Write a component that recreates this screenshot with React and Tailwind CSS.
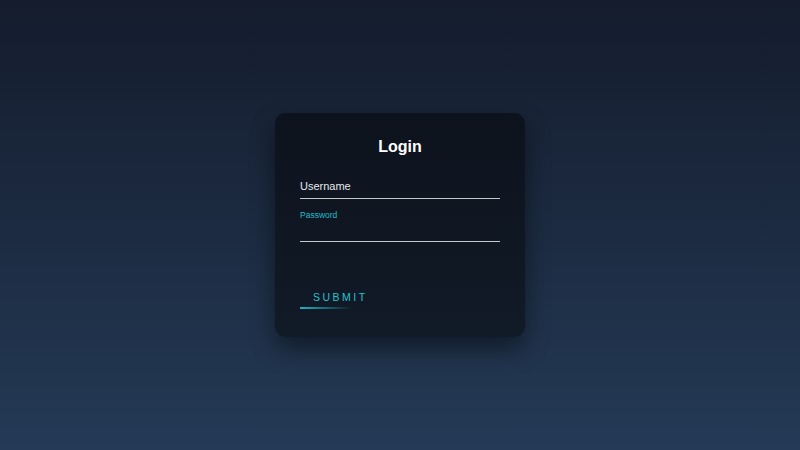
export default function App() {
  return (
    <div className="min-h-screen w-full flex items-center justify-center bg-gradient-to-b from-[#141c2d] to-[#243a56] font-['Liberation_Sans',Arial,sans-serif]">
      {/* login card */}
      <div className="w-[250px] h-[224px] rounded-[10px] bg-gradient-to-b from-[#0d131d] to-[#111a27] shadow-[0_12px_24px_rgba(0,0,0,0.45)] px-[25px] pt-[24px]">
        <h2 className="text-center text-white font-bold text-[16px] leading-[20px]">Login</h2>

        <form className="mt-[21px]" onSubmit={(e) => e.preventDefault()}>
          <div className="border-b border-[#c4c8ce] pb-[4px]">
            <input
              type="text"
              placeholder="Username"
              className="block w-full bg-transparent outline-none text-[11px] leading-[16px] text-[#e5e7eb] placeholder:text-[#e5e7eb]"
            />
          </div>

          <div className="mt-[11px] border-b border-[#c4c8ce]">
            <label className="block text-[8.5px] leading-[11px] text-[#22bcc9]">Password</label>
            <input type="password" className="block w-full bg-transparent outline-none h-[20px] text-[11px] text-white" />
          </div>

          <button type="submit" className="relative mt-[48px] pl-[13px] pr-[10px] pb-[5px] text-[10.5px] leading-[14px] tracking-[2.5px] text-[#26c2d0]">
            SUBMIT
            <span className="absolute left-0 bottom-0 h-[2px] w-[52px] bg-gradient-to-r from-[#20b4c2] to-transparent" />
          </button>
        </form>
      </div>
    </div>
  );
}
